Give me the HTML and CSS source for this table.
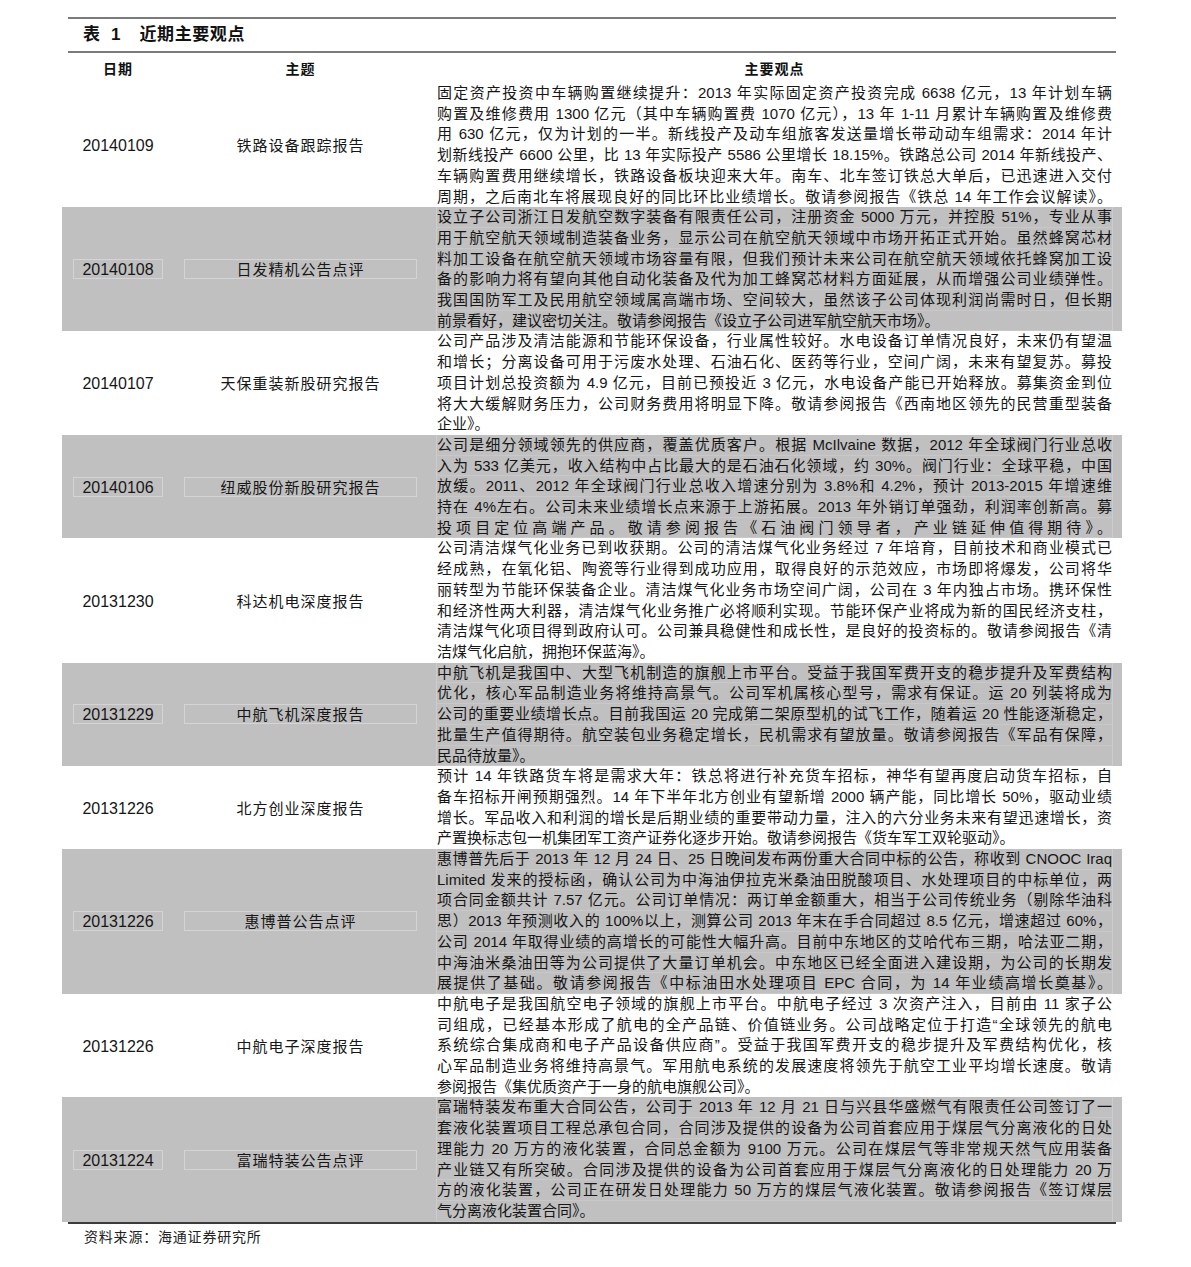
FILE: index.html
```html
<!DOCTYPE html>
<html lang="zh-CN">
<head>
<meta charset="utf-8">
<title>近期主要观点</title>
<link rel="stylesheet" href="styles.css">
</head>
<body>
<div class="page">
  <div class="rule"></div>
  <div class="title"><span class="t-pre">表</span><span class="t-num">1</span><span class="t-name">近期主要观点</span></div>
  <div class="rule"></div>

  <div class="table">
    <div class="row head">
      <div class="c-date">日期</div>
      <div class="c-topic">主题</div>
      <div class="c-text"><div class="box">主要观点</div></div>
    </div>

    <div class="row first">
      <div class="c-date"><span class="tag">20140109</span></div>
      <div class="c-topic"><span class="tag">铁路设备跟踪报告</span></div>
      <div class="c-text"><div class="box">
        <div class="j">固定资产投资中车辆购置继续提升：2013 年实际固定资产投资完成 6638 亿元，13 年计划车辆</div>
        <div class="j">购置及维修费用 1300 亿元（其中车辆购置费 1070 亿元），13 年 1-11 月累计车辆购置及维修费</div>
        <div class="j">用 630 亿元，仅为计划的一半。新线投产及动车组旅客发送量增长带动动车组需求：2014 年计</div>
        <div class="j">划新线投产 6600 公里，比 13 年实际投产 5586 公里增长 18.15%。铁路总公司 2014 年新线投产、</div>
        <div class="j">车辆购置费用继续增长，铁路设备板块迎来大年。南车、北车签订铁总大单后，已迅速进入交付</div>
        <div class="j">周期，之后南北车将展现良好的同比环比业绩增长。敬请参阅报告《铁总 14 年工作会议解读》。</div>
      </div></div>
    </div>

    <div class="row gray">
      <div class="c-date"><span class="tag">20140108</span></div>
      <div class="c-topic"><span class="tag">日发精机公告点评</span></div>
      <div class="c-text"><div class="box">
        <div class="j">设立子公司浙江日发航空数字装备有限责任公司，注册资金 5000 万元，并控股 51%，专业从事</div>
        <div class="j">用于航空航天领域制造装备业务，显示公司在航空航天领域中市场开拓正式开始。虽然蜂窝芯材</div>
        <div class="j">料加工设备在航空航天领域市场容量有限，但我们预计未来公司在航空航天领域依托蜂窝加工设</div>
        <div class="j">备的影响力将有望向其他自动化装备及代为加工蜂窝芯材料方面延展，从而增强公司业绩弹性。</div>
        <div class="j">我国国防军工及民用航空领域属高端市场、空间较大，虽然该子公司体现利润尚需时日，但长期</div>
        <div class="e">前景看好，建议密切关注。敬请参阅报告《设立子公司进军航空航天市场》。</div>
      </div></div>
    </div>

    <div class="row">
      <div class="c-date"><span class="tag">20140107</span></div>
      <div class="c-topic"><span class="tag">天保重装新股研究报告</span></div>
      <div class="c-text"><div class="box">
        <div class="j">公司产品涉及清洁能源和节能环保设备，行业属性较好。水电设备订单情况良好，未来仍有望温</div>
        <div class="j">和增长；分离设备可用于污废水处理、石油石化、医药等行业，空间广阔，未来有望复苏。募投</div>
        <div class="j">项目计划总投资额为 4.9 亿元，目前已预投近 3 亿元，水电设备产能已开始释放。募集资金到位</div>
        <div class="j">将大大缓解财务压力，公司财务费用将明显下降。敬请参阅报告《西南地区领先的民营重型装备</div>
        <div class="e">企业》。</div>
      </div></div>
    </div>

    <div class="row gray">
      <div class="c-date"><span class="tag">20140106</span></div>
      <div class="c-topic"><span class="tag">纽威股份新股研究报告</span></div>
      <div class="c-text"><div class="box">
        <div class="j">公司是细分领域领先的供应商，覆盖优质客户。根据 McIlvaine 数据，2012 年全球阀门行业总收</div>
        <div class="j">入为 533 亿美元，收入结构中占比最大的是石油石化领域，约 30%。阀门行业：全球平稳，中国</div>
        <div class="j">放缓。2011、2012 年全球阀门行业总收入增速分别为 3.8%和 4.2%，预计 2013-2015 年增速维</div>
        <div class="j">持在 4%左右。公司未来业绩增长点来源于上游拓展。2013 年外销订单强劲，利润率创新高。募</div>
        <div class="j">投项目定位高端产品。敬请参阅报告《石油阀门领导者，产业链延伸值得期待》。</div>
      </div></div>
    </div>

    <div class="row">
      <div class="c-date"><span class="tag">20131230</span></div>
      <div class="c-topic"><span class="tag">科达机电深度报告</span></div>
      <div class="c-text"><div class="box">
        <div class="j">公司清洁煤气化业务已到收获期。公司的清洁煤气化业务经过 7 年培育，目前技术和商业模式已</div>
        <div class="j">经成熟，在氧化铝、陶瓷等行业得到成功应用，取得良好的示范效应，市场即将爆发，公司将华</div>
        <div class="j">丽转型为节能环保装备企业。清洁煤气化业务市场空间广阔，公司在 3 年内独占市场。携环保性</div>
        <div class="j">和经济性两大利器，清洁煤气化业务推广必将顺利实现。节能环保产业将成为新的国民经济支柱，</div>
        <div class="j">清洁煤气化项目得到政府认可。公司兼具稳健性和成长性，是良好的投资标的。敬请参阅报告《清</div>
        <div class="e">洁煤气化启航，拥抱环保蓝海》。</div>
      </div></div>
    </div>

    <div class="row gray">
      <div class="c-date"><span class="tag">20131229</span></div>
      <div class="c-topic"><span class="tag">中航飞机深度报告</span></div>
      <div class="c-text"><div class="box">
        <div class="j">中航飞机是我国中、大型飞机制造的旗舰上市平台。受益于我国军费开支的稳步提升及军费结构</div>
        <div class="j">优化，核心军品制造业务将维持高景气。公司军机属核心型号，需求有保证。运 20 列装将成为</div>
        <div class="j">公司的重要业绩增长点。目前我国运 20 完成第二架原型机的试飞工作，随着运 20 性能逐渐稳定，</div>
        <div class="j">批量生产值得期待。航空装包业务稳定增长，民机需求有望放量。敬请参阅报告《军品有保障，</div>
        <div class="e">民品待放量》。</div>
      </div></div>
    </div>

    <div class="row">
      <div class="c-date"><span class="tag">20131226</span></div>
      <div class="c-topic"><span class="tag">北方创业深度报告</span></div>
      <div class="c-text"><div class="box">
        <div class="j">预计 14 年铁路货车将是需求大年：铁总将进行补充货车招标，神华有望再度启动货车招标，自</div>
        <div class="j">备车招标开闸预期强烈。14 年下半年北方创业有望新增 2000 辆产能，同比增长 50%，驱动业绩</div>
        <div class="j">增长。军品收入和利润的增长是后期业绩的重要带动力量，注入的六分业务未来有望迅速增长，资</div>
        <div class="e">产置换标志包一机集团军工资产证券化逐步开始。敬请参阅报告《货车军工双轮驱动》。</div>
      </div></div>
    </div>

    <div class="row gray">
      <div class="c-date"><span class="tag">20131226</span></div>
      <div class="c-topic"><span class="tag">惠博普公告点评</span></div>
      <div class="c-text"><div class="box">
        <div class="j">惠博普先后于 2013 年 12 月 24 日、25 日晚间发布两份重大合同中标的公告，称收到 CNOOC Iraq</div>
        <div class="j">Limited 发来的授标函，确认公司为中海油伊拉克米桑油田脱酸项目、水处理项目的中标单位，两</div>
        <div class="j">项合同金额共计 7.57 亿元。公司订单情况：两订单金额重大，相当于公司传统业务（剔除华油科</div>
        <div class="j">思）2013 年预测收入的 100%以上，测算公司 2013 年末在手合同超过 8.5 亿元，增速超过 60%，</div>
        <div class="j">公司 2014 年取得业绩的高增长的可能性大幅升高。目前中东地区的艾哈代布三期，哈法亚二期，</div>
        <div class="j">中海油米桑油田等为公司提供了大量订单机会。中东地区已经全面进入建设期，为公司的长期发</div>
        <div class="j">展提供了基础。敬请参阅报告《中标油田水处理项目 EPC 合同，为 14 年业绩高增长奠基》。</div>
      </div></div>
    </div>

    <div class="row">
      <div class="c-date"><span class="tag">20131226</span></div>
      <div class="c-topic"><span class="tag">中航电子深度报告</span></div>
      <div class="c-text"><div class="box">
        <div class="j">中航电子是我国航空电子领域的旗舰上市平台。中航电子经过 3 次资产注入，目前由 11 家子公</div>
        <div class="j">司组成，已经基本形成了航电的全产品链、价值链业务。公司战略定位于打造“全球领先的航电</div>
        <div class="j">系统综合集成商和电子产品设备供应商”。受益于我国军费开支的稳步提升及军费结构优化，核</div>
        <div class="j">心军品制造业务将维持高景气。军用航电系统的发展速度将领先于航空工业平均增长速度。敬请</div>
        <div class="e">参阅报告《集优质资产于一身的航电旗舰公司》。</div>
      </div></div>
    </div>

    <div class="row gray">
      <div class="c-date"><span class="tag">20131224</span></div>
      <div class="c-topic"><span class="tag">富瑞特装公告点评</span></div>
      <div class="c-text"><div class="box">
        <div class="j">富瑞特装发布重大合同公告，公司于 2013 年 12 月 21 日与兴县华盛燃气有限责任公司签订了一</div>
        <div class="j">套液化装置项目工程总承包合同，合同涉及提供的设备为公司首套应用于煤层气分离液化的日处</div>
        <div class="j">理能力 20 万方的液化装置，合同总金额为 9100 万元。公司在煤层气等非常规天然气应用装备</div>
        <div class="j">产业链又有所突破。合同涉及提供的设备为公司首套应用于煤层气分离液化的日处理能力 20 万</div>
        <div class="j">方的液化装置，公司正在研发日处理能力 50 万方的煤层气液化装置。敬请参阅报告《签订煤层</div>
        <div class="e">气分离液化装置合同》。</div>
      </div></div>
    </div>
  </div>

  <div class="rule dark"></div>
  <div class="source">资料来源：海通证券研究所</div>
</div>
</body>
</html>
```

FILE: styles.css
```css
* { box-sizing: border-box; }
html, body { margin: 0; padding: 0; background: #fff; }
body {
  font-family: "Liberation Sans", "Noto Sans CJK SC", sans-serif;
  color: #161616;
  width: 1191px;
}
.page { padding-top: 17px; }

.rule {
  margin-left: 68px;
  width: 1048px;
  height: 2px;
  background: #7b7b7b;
}
.rule.dark { background: #3c3c3c; }

.title {
  height: 32px;
  line-height: 32px;
  padding-left: 83px;
  font-weight: bold;
  font-size: 17px;
  color: #111;
}
.t-num { margin-left: 11px; }
.t-name { margin-left: 19px; letter-spacing: 0.6px; }

.table {
  margin-left: 62px;
  width: 1060px;
}
.row {
  display: grid;
  grid-template-columns: 112px 252px 696px;
  align-items: stretch;
}
.row.gray { background: #c0c0c0; }

.c-date, .c-topic {
  display: flex;
  align-items: center;
  justify-content: center;
}
.c-date { font-size: 16px; padding: 0 11px; }
.c-topic { font-size: 15px; letter-spacing: 1px; padding: 0 9px 0 10px; }

.tag {
  display: block;
  width: 100%;
  height: 20px;
  line-height: 19px;
  text-align: center;
  border: 1px solid transparent;
}
.gray .tag { border-color: #d4d4d4; }

.c-text { padding: 0 9px 0 10px; }
.box {
  height: 100%;
  border-left: 1px solid transparent;
  border-right: 1px solid transparent;
  font-size: 15px;
  line-height: 20.7px;
}
.gray .box { border-color: #cdcdcd; }
.gray .box .j, .gray .box .e { box-shadow: inset 0 -1px 0 #c8c8c8; }

.j { text-align: justify; text-align-last: justify; }
.e { text-align: left; }

.row.head {
  height: 25px;
  line-height: 25px;
  font-size: 14px;
  font-weight: bold;
  color: #111;
}
.row.head .c-date, .row.head .c-topic { font-size: 14px; letter-spacing: 1px; padding-top: 4px; }
.row.head .box { text-align: center; font-size: 14px; line-height: 25px; padding-top: 4px; letter-spacing: 1px; }

.row.first { padding-top: 5px; }

.source {
  padding-left: 84px;
  height: 26px;
  line-height: 26px;
  font-size: 14px;
  letter-spacing: 0.8px;
  color: #222;
}
```
